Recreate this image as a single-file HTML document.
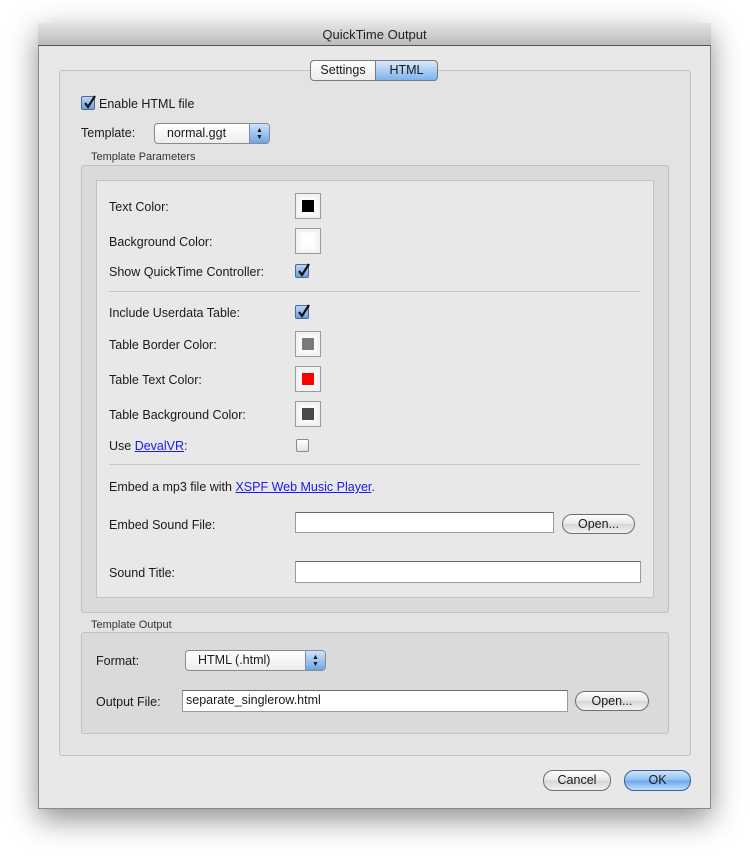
<!DOCTYPE html>
<html><head><meta charset="utf-8"><style>
*{margin:0;padding:0;box-sizing:border-box}
body{width:750px;height:863px;background:#fff;position:relative;overflow:hidden;font-family:"Liberation Sans",sans-serif;font-size:12.5px;color:#1a1a1a}
.a{position:absolute}
.win{left:38px;top:23px;width:673px;height:786px;background:#e8e8e8;border:1px solid #8a8a8a;box-shadow:0 10px 28px rgba(0,0,0,.45)}
.title{left:38px;top:23px;width:673px;height:23px;background:linear-gradient(#e4e4e4,#bcbcbc);border-bottom:1px solid #555;text-align:center;line-height:23px;font-size:13px;color:#222}
.tabbox{left:59px;top:70px;width:632px;height:686px;background:#e3e3e3;border:1px solid #c2c2c2;border-radius:3px}
.seg{top:60px;height:21px;border:1px solid #7a7a7a;line-height:19px;text-align:center;font-size:12.5px}
.grp{background:#dadada;border:1px solid #c0c0c0;border-radius:3px}
.inner{background:#e8e8e8;border:1px solid #c4c4c4}
.lbl{font-size:12.5px;line-height:14px}
.small{font-size:11px;color:#333}
.sw{width:26px;height:26px;background:#fafafa;border:1px solid #9a9a9a;box-shadow:inset 0 0 0 3px #f2f2f2}
.sw i{position:absolute;left:6px;top:6px;width:12px;height:12px}
.cb{width:14px;height:14px;border:1px solid #4a6b9a;border-radius:2px;background:linear-gradient(#bcd6f5,#6fa0dc)}
.cb svg{position:absolute;left:0;top:-3px}
.field{background:#fff;border:1px solid #9a9a9a;border-top-color:#6a6a6a}
.btn{height:20px;border:1px solid #6e6e6e;border-radius:10px;background:linear-gradient(#fff,#e6e6e6 50%,#d6d6d6 51%,#f2f2f2);text-align:center;line-height:18px;font-size:12.5px}
.pop{height:21px;border:1px solid #8a8a8a;border-radius:4px;background:linear-gradient(#fff,#ededed);line-height:19px;padding-left:12px;overflow:hidden}
.pop b{position:absolute;right:0;top:0;width:20px;height:19px;background:linear-gradient(#cfe3fb,#6ea4e6);border-left:1px solid #7a8fb0;font-size:7px;line-height:7px;text-align:center;padding-top:3px;font-weight:normal}
.sep{height:1px;background:#c6c6c6}
a{color:#1a1aee;text-decoration:underline}
</style></head><body>
<div class="a win"></div>
<div class="a title">QuickTime Output</div>
<div class="a tabbox"></div>
<div class="a seg" style="left:310px;width:66px;background:linear-gradient(#fff,#ececec);border-radius:4px 0 0 4px">Settings</div>
<div class="a seg" style="left:375px;width:63px;background:linear-gradient(#d8e8fb,#7fb3ec);border-radius:0 4px 4px 0">HTML</div>

<div class="a cb" style="left:81px;top:96px"><svg width="16" height="17"><path d="M3 9 L6 13 L13 2" stroke="#111" stroke-width="2.2" fill="none"/></svg></div>
<div class="a lbl" style="left:99px;top:97px">Enable HTML file</div>
<div class="a lbl" style="left:81px;top:126px">Template:</div>
<div class="a pop" style="left:154px;top:123px;width:116px">normal.ggt<b>▲<br>▼</b></div>

<div class="a small" style="left:91px;top:151px">Template Parameters</div>
<div class="a grp" style="left:81px;top:165px;width:588px;height:448px"></div>
<div class="a inner" style="left:96px;top:180px;width:558px;height:418px"></div>

<div class="a lbl" style="left:109px;top:200px">Text Color:</div>
<div class="a sw" style="left:295px;top:193px"><i style="background:#000"></i></div>
<div class="a lbl" style="left:109px;top:235px">Background Color:</div>
<div class="a sw" style="left:295px;top:228px"><i style="background:#fff"></i></div>
<div class="a lbl" style="left:109px;top:265px">Show QuickTime Controller:</div>
<div class="a cb" style="left:295px;top:264px"><svg width="16" height="17"><path d="M3 9 L6 13 L13 2" stroke="#111" stroke-width="2.2" fill="none"/></svg></div>
<div class="a sep" style="left:109px;top:291px;width:531px"></div>
<div class="a lbl" style="left:109px;top:306px">Include Userdata Table:</div>
<div class="a cb" style="left:295px;top:305px"><svg width="16" height="17"><path d="M3 9 L6 13 L13 2" stroke="#111" stroke-width="2.2" fill="none"/></svg></div>
<div class="a lbl" style="left:109px;top:338px">Table Border Color:</div>
<div class="a sw" style="left:295px;top:331px"><i style="background:#7a7a7a"></i></div>
<div class="a lbl" style="left:109px;top:373px">Table Text Color:</div>
<div class="a sw" style="left:295px;top:366px"><i style="background:#f00"></i></div>
<div class="a lbl" style="left:109px;top:408px">Table Background Color:</div>
<div class="a sw" style="left:295px;top:401px"><i style="background:#4a4a4a"></i></div>
<div class="a lbl" style="left:109px;top:439px">Use <a>DevalVR</a>:</div>
<div class="a" style="left:296px;top:439px;width:13px;height:13px;border:1px solid #8a8a8a;border-radius:2px;background:linear-gradient(#fff,#e4e4e4)"></div>
<div class="a sep" style="left:109px;top:464px;width:531px"></div>
<div class="a lbl" style="left:109px;top:480px">Embed a mp3 file with <a>XSPF Web Music Player</a>.</div>
<div class="a lbl" style="left:109px;top:518px">Embed Sound File:</div>
<div class="a field" style="left:295px;top:512px;width:259px;height:21px"></div>
<div class="a btn" style="left:562px;top:514px;width:73px">Open...</div>
<div class="a lbl" style="left:109px;top:566px">Sound Title:</div>
<div class="a field" style="left:295px;top:561px;width:346px;height:22px"></div>

<div class="a small" style="left:91px;top:619px">Template Output</div>
<div class="a grp" style="left:81px;top:632px;width:588px;height:102px"></div>
<div class="a lbl" style="left:96px;top:654px">Format:</div>
<div class="a pop" style="left:185px;top:650px;width:141px">HTML (.html)<b>▲<br>▼</b></div>
<div class="a lbl" style="left:96px;top:695px">Output File:</div>
<div class="a field" style="left:182px;top:690px;width:386px;height:22px;padding:2px 3px;font-size:12.5px">separate_singlerow.html</div>
<div class="a btn" style="left:575px;top:691px;width:74px">Open...</div>

<div class="a btn" style="left:543px;top:770px;width:68px;height:21px">Cancel</div>
<div class="a btn" style="left:624px;top:770px;width:67px;height:21px;border-color:#3d5f96;background:linear-gradient(#cfe4fc,#8cbdf2 50%,#6aa5ea 51%,#bfe0fd)">OK</div>
</body></html>
